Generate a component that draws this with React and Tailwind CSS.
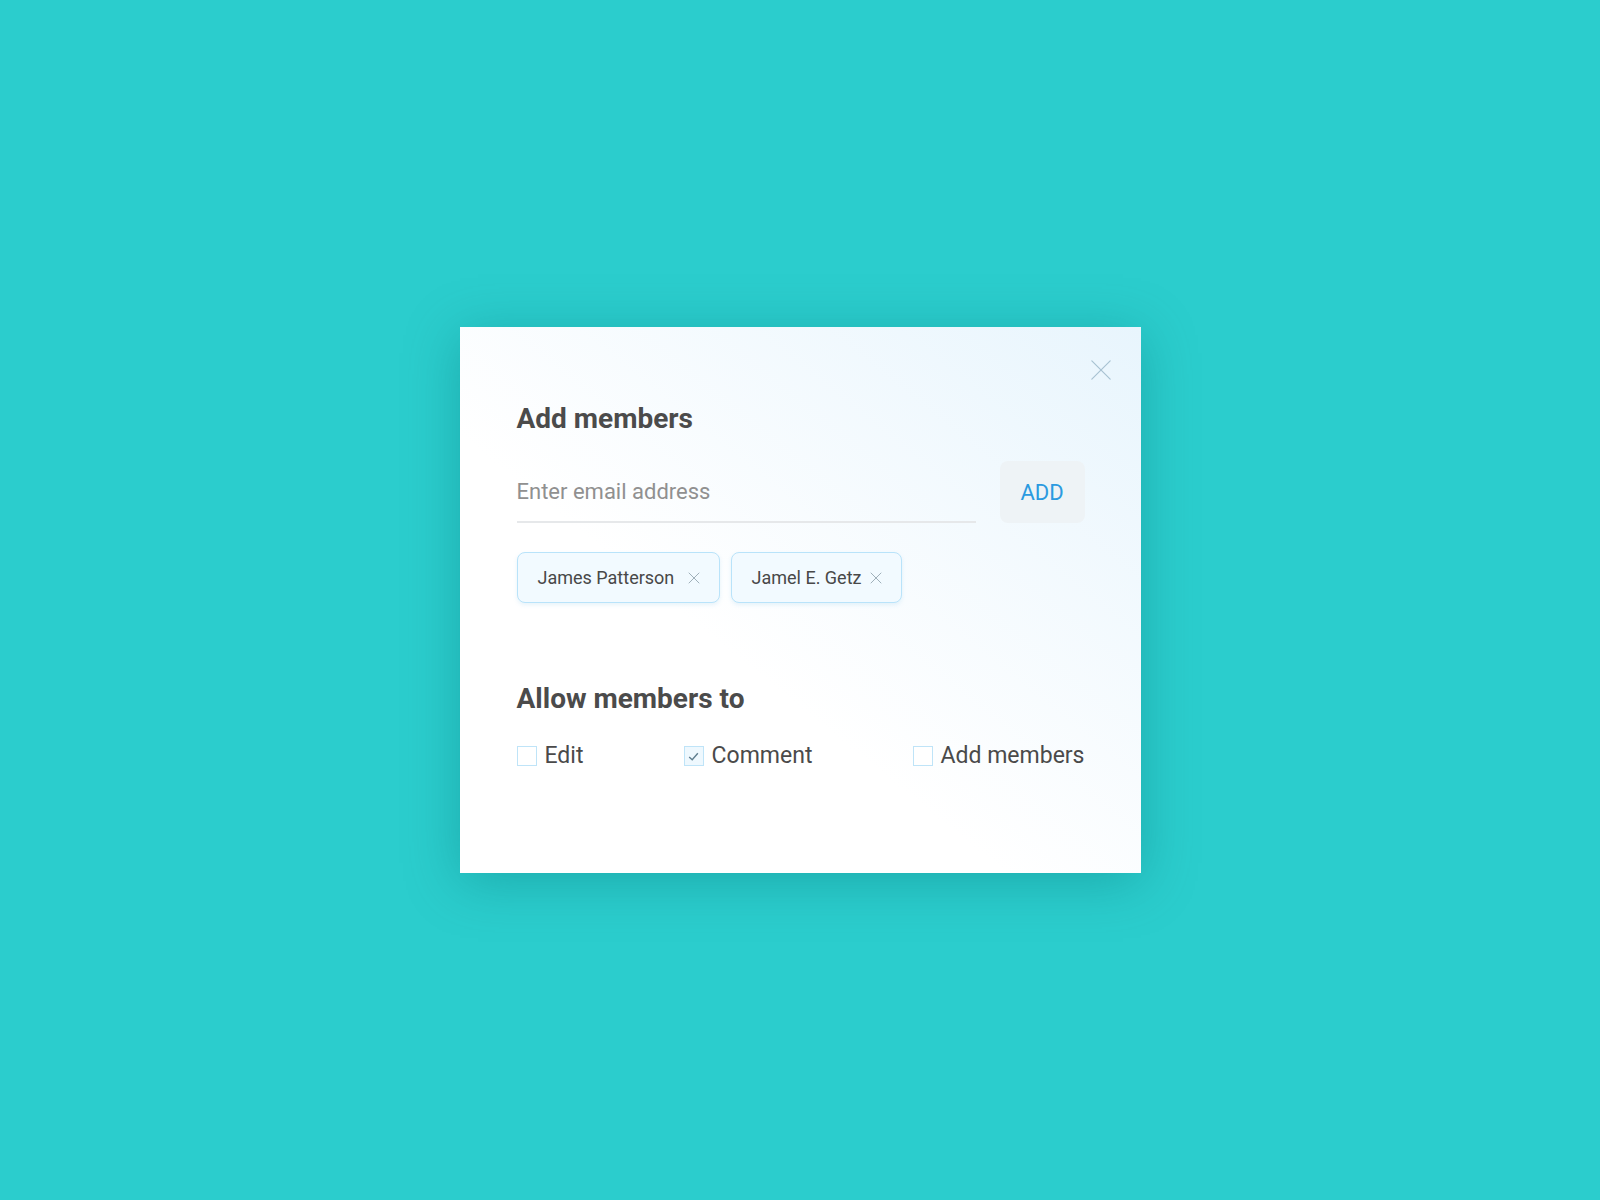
import React, { useState } from 'react';

const XIcon = ({ className, strokeWidth = 1.5 }) => (
  <svg viewBox="0 0 24 24" fill="none" stroke="currentColor" strokeWidth={strokeWidth} strokeLinecap="round" className={className}>
    <path d="M2 2 L22 22 M22 2 L2 22" />
  </svg>
);

const Chip = ({ name, width }) => (
  <div
    className={`flex h-[51px] items-center justify-between rounded-lg border border-[#b9e3fa] bg-[#f2faff] pl-5 pr-[19px] text-[18px] text-[#484848] shadow-[0_2px_4px_rgba(120,190,230,0.18)] ${width}`}
  >
    <span>{name}</span>
    <XIcon className="h-3 w-3 text-[#9fb0ba]" strokeWidth={2} />
  </div>
);

const Checkbox = ({ label, checked, onToggle }) => (
  <label className="flex cursor-pointer items-center gap-2 text-[23px] leading-[26px] text-[#4a4a4a]">
    <span
      onClick={onToggle}
      className={`flex h-5 w-5 items-center justify-center border-[1.5px] border-[#bfe4f8] ${checked ? 'bg-[#eef8fe]' : 'bg-white'}`}
    >
      {checked && (
        <svg viewBox="0 0 12 12" fill="none" stroke="#5f7e8f" strokeWidth="1.3" className="h-[13px] w-[13px]">
          <path d="M2 6.5 L4.8 9 L10 3" />
        </svg>
      )}
    </span>
    <span onClick={onToggle}>{label}</span>
  </label>
);

export default function App() {
  const [perms, setPerms] = useState({ edit: false, comment: true, add: false });
  const toggle = (key) => setPerms({ ...perms, [key]: !perms[key] });

  return (
    <div className="flex min-h-screen w-full items-center justify-center bg-[#2bcdcd]" style={{ fontFamily: 'Roboto, "Noto Sans", sans-serif' }}>
      <div className="relative h-[546px] w-[681px] bg-linear-to-tr from-white from-40% to-[#e8f5fd] pl-[57px] pr-[56px] pt-[75px] shadow-[0_8px_50px_rgba(0,105,110,0.35)]">
        <button className="absolute right-[29px] top-[32px] text-[#a8c2d2]">
          <XIcon className="h-[22px] w-[22px]" strokeWidth={1.3} />
        </button>

        <h2 className="text-[28px] font-bold leading-[34px] text-[#4b4b4b]">Add members</h2>

        <div className="mt-[25px] flex gap-6">
          <input
            type="text"
            placeholder="Enter email address"
            className="h-[62px] flex-1 border-b-2 border-[#e6e8ea] bg-transparent text-[22px] text-[#4a4a4a] outline-none placeholder:text-[#909090]"
          />
          <button className="h-[62px] w-[85px] rounded-lg bg-[#eef3f6] text-[22px] text-[#2b9ae0]">ADD</button>
        </div>

        <div className="mt-[29px] flex gap-[11px]">
          <Chip name="James Patterson" width="w-[203px]" />
          <Chip name="Jamel E. Getz" width="w-[171px]" />
        </div>

        <h2 className="mt-[79px] text-[28px] font-bold leading-[34px] text-[#4b4b4b]">Allow members to</h2>

        <div className="mt-[27px] flex items-center justify-between">
          <Checkbox label="Edit" checked={perms.edit} onToggle={() => toggle('edit')} />
          <Checkbox label="Comment" checked={perms.comment} onToggle={() => toggle('comment')} />
          <Checkbox label="Add members" checked={perms.add} onToggle={() => toggle('add')} />
        </div>
      </div>
    </div>
  );
}
